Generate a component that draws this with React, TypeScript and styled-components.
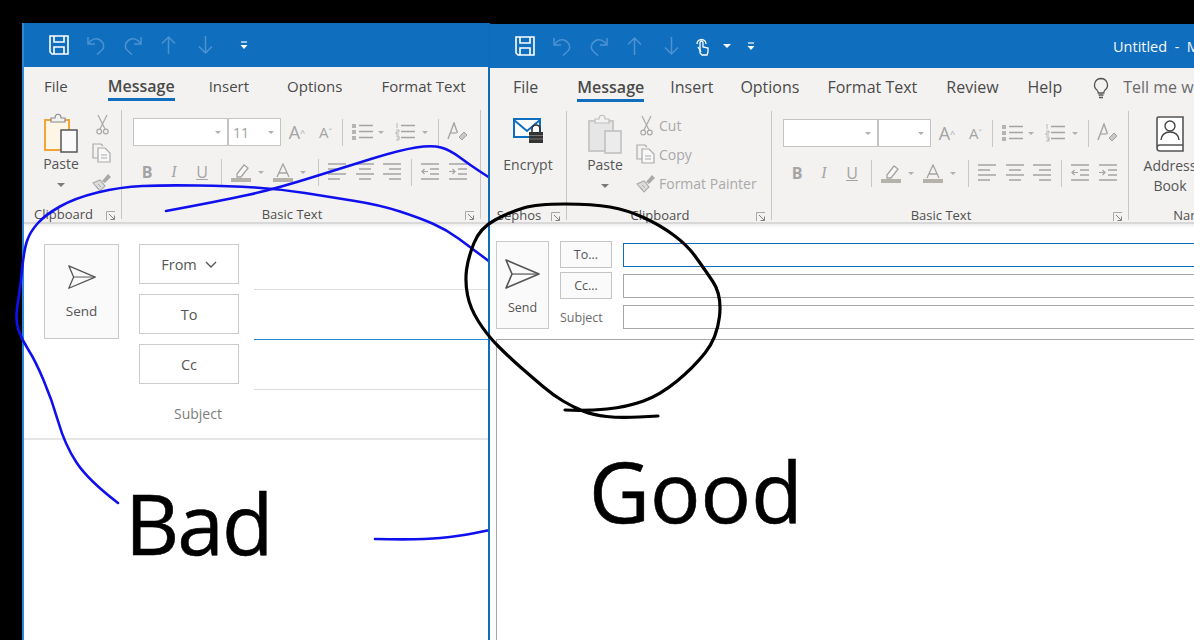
import React from 'react';
import styled, { createGlobalStyle } from 'styled-components';

const GlobalStyle = createGlobalStyle`
  html, body {
    margin: 0;
    height: 100%;
    background: #000;
    overflow: hidden;
    font-family: "Open Sans", "Noto Sans", sans-serif;
  }
`;

const Desktop = styled.div`
  position: relative;
  width: 1194px;
  height: 640px;
  overflow: hidden;
  background: #000;
`;

const Window = styled.div<{ $x: number; $y: number; $w: number; $z: number; $edge: string }>`
  position: absolute;
  left: ${(p) => p.$x}px;
  top: ${(p) => p.$y}px;
  width: ${(p) => p.$w}px;
  height: ${(p) => 640 - p.$y}px;
  z-index: ${(p) => p.$z};
  background: #fff;
  border-left: 2px solid ${(p) => p.$edge};
  display: flex;
  flex-direction: column;
  overflow: hidden;
`;

const TitleBar = styled.div`
  height: 44px;
  flex: none;
  background: #106ebe;
  display: flex;
  align-items: center;
  padding-left: 24px;
  color: #fff;
`;

const QuickSlot = styled.div<{ $w: number }>`
  width: ${(p) => p.$w}px;
  flex: none;
  display: flex;
  align-items: center;
`;

const TitleText = styled.div<{ $ml: number }>`
  margin-left: ${(p) => p.$ml}px;
  font-size: 14.5px;
  white-space: pre;
  color: #f4f8fc;
`;

const TabRow = styled.div<{ $pl: number }>`
  height: 40px;
  flex: none;
  background: #f3f2f1;
  display: flex;
  align-items: flex-start;
  padding-left: ${(p) => p.$pl}px;
`;

const Tab = styled.div<{ $active?: boolean; $ml: number; $size: number }>`
  margin-left: ${(p) => p.$ml}px;
  margin-top: 8px;
  height: 23px;
  line-height: 22px;
  font-size: ${(p) => p.$size}px;
  font-weight: ${(p) => (p.$active ? 600 : 400)};
  color: #4a4a4a;
  white-space: nowrap;
  flex: none;
  border-bottom: 3px solid ${(p) => (p.$active ? '#106ebe' : 'transparent')};
`;

const TellMe = styled.div`
  margin-left: 13px;
  margin-top: 8px;
  line-height: 22px;
  font-size: 16px;
  color: #6a6a6a;
  white-space: nowrap;
`;

const BulbBox = styled.div`
  margin-left: 30px;
  margin-top: 9px;
  color: #555;
  display: flex;
`;

const Ribbon = styled.div<{ $h: number }>`
  height: ${(p) => p.$h}px;
  flex: none;
  box-sizing: border-box;
  background: #f3f2f1;
  display: flex;
  padding-top: 3px;
  border-bottom: 2px solid #d8d8d8;
  box-shadow: 0 2px 3px rgba(0, 0, 0, 0.08);
  position: relative;
  z-index: 1;
`;

const Group = styled.div<{ $w: number }>`
  width: ${(p) => p.$w}px;
  height: 109px;
  flex: none;
  box-sizing: border-box;
  border-right: 1px solid #c6c6c6;
  position: relative;
  display: flex;
  flex-direction: column;
`;

const GroupBody = styled.div`
  flex: 1;
  display: flex;
  min-height: 0;
`;

const GroupLabel = styled.div`
  height: 20px;
  line-height: 18px;
  flex: none;
  margin-bottom: -6px;
  padding-right: 18px;
  text-align: center;
  font-size: 13px;
  color: #4f4f4f;
  white-space: nowrap;
`;

const Launcher = styled.svg`
  position: absolute;
  right: 5px;
  bottom: -2px;
  width: 10px;
  height: 10px;
`;

const BigButton = styled.div<{ $w: number; $ml?: number }>`
  width: ${(p) => p.$w}px;
  margin-left: ${(p) => p.$ml ?? 0}px;
  flex: none;
  display: flex;
  flex-direction: column;
  align-items: center;
  font-size: 14px;
  line-height: 20px;
  color: #555;
`;

const ButtonText = styled.span<{ $mt?: number }>`
  margin-top: ${(p) => p.$mt ?? 0}px;
`;

const IconHold = styled.div<{ $h: number }>`
  height: ${(p) => p.$h}px;
  display: flex;
  align-items: flex-end;
  justify-content: center;
  flex: none;
`;

const Caret = styled.div<{ $mt?: number; $soft?: boolean }>`
  width: 0;
  height: 0;
  border-left: ${(p) => (p.$soft ? 3.5 : 4)}px solid transparent;
  border-right: ${(p) => (p.$soft ? 3.5 : 4)}px solid transparent;
  border-top: ${(p) => (p.$soft ? 3 : 4)}px solid ${(p) => (p.$soft ? '#b0b0b0' : '#7a7a7a')};
  margin-top: ${(p) => p.$mt ?? 0}px;
`;

const SmallStack = styled.div<{ $ml: number }>`
  margin-left: ${(p) => p.$ml}px;
  padding-top: 2px;
  display: flex;
  flex-direction: column;
  gap: 5px;
`;

const SmallItem = styled.div`
  height: 24px;
  display: flex;
  align-items: center;
  gap: 2px;
  font-size: 14px;
  color: #a9a9a9;
  white-space: nowrap;
`;

const SmallIcon = styled.div`
  width: 22px;
  display: flex;
  justify-content: center;
  flex: none;
`;

const ToolColumn = styled.div`
  padding: 7px 0 0 11px;
  display: flex;
  flex-direction: column;
  gap: 10px;
`;

const ToolRow = styled.div`
  height: 30px;
  display: flex;
  align-items: center;
`;

const FontBox = styled.div<{ $w: number }>`
  width: ${(p) => p.$w}px;
  height: 28px;
  box-sizing: border-box;
  background: #fff;
  border: 1px solid #c4c4c4;
  display: flex;
  align-items: center;
  justify-content: space-between;
  padding: 0 6px 0 4px;
  font-size: 14px;
  color: #a0a0a0;
  flex: none;
`;

const Slot = styled.div<{ $w: number; $ml?: number }>`
  width: ${(p) => p.$w}px;
  margin-left: ${(p) => p.$ml ?? 0}px;
  display: flex;
  justify-content: center;
  align-items: center;
  flex: none;
  color: #a4a4a4;
`;

const ToolLetter = styled(Slot)<{ $bold?: boolean; $italic?: boolean; $under?: boolean }>`
  font-family: ${(p) => (p.$italic ? '"Liberation Serif", serif' : '"Open Sans", sans-serif')};
  font-size: 16px;
  line-height: 18px;
  font-weight: ${(p) => (p.$bold ? 700 : 400)};
  font-style: ${(p) => (p.$italic ? 'italic' : 'normal')};
  text-decoration: ${(p) => (p.$under ? 'underline' : 'none')};
`;

const GrowA = styled.span<{ $size: number }>`
  font-size: ${(p) => p.$size}px;
  line-height: 20px;
  color: #a4a4a4;
`;

const Tick = styled.span`
  font-size: 9px;
  line-height: 9px;
  align-self: flex-start;
  margin-top: 6px;
  color: #a4a4a4;
`;

const ToolSep = styled.div<{ $ml: number }>`
  width: 1px;
  height: 27px;
  margin-left: ${(p) => p.$ml}px;
  background: #c8c8c8;
  flex: none;
`;

const LeftForm = styled.div`
  height: 216px;
  flex: none;
  box-sizing: border-box;
  border-bottom: 2px solid #e6e6e6;
  display: flex;
  padding: 20px 0 0 20px;
`;

const SendButton = styled.div<{ $w: number; $h: number; $gap: number; $pt: number; $size: number }>`
  width: ${(p) => p.$w}px;
  height: ${(p) => p.$h}px;
  box-sizing: border-box;
  border: 1px solid #c9c9c9;
  padding-top: ${(p) => p.$pt}px;
  background: #fafafa;
  display: flex;
  flex-direction: column;
  align-items: center;
  gap: ${(p) => p.$gap}px;
  font-size: ${(p) => p.$size}px;
  color: #555;
  flex: none;
`;

const LeftFields = styled.div`
  margin-left: 20px;
  width: 100px;
  flex: none;
  display: flex;
  flex-direction: column;
  gap: 10px;
`;

const FieldButton = styled.div`
  height: 40px;
  flex: none;
  box-sizing: border-box;
  border: 1px solid #cbcbcb;
  display: flex;
  align-items: center;
  justify-content: center;
  gap: 8px;
  font-size: 14.5px;
  color: #555;
`;

const LeftSubject = styled.div`
  margin-left: 35px;
  font-size: 14px;
  line-height: 40px;
  color: #7d7d7d;
`;

const LeftLines = styled.div`
  margin-left: 15px;
  flex: 1;
  margin-top: -20px;
`;

const LineRow = styled.div<{ $h: number; $accent?: boolean }>`
  height: ${(p) => p.$h}px;
  box-sizing: border-box;
  border-bottom: 1px solid ${(p) => (p.$accent ? '#2b88d8' : '#dcdcdc')};
`;

const RightForm = styled.div`
  flex: none;
  display: flex;
  padding: 17px 0 0 6px;
`;

const RightFields = styled.div`
  margin-left: 11px;
  width: 52px;
  flex: none;
  display: flex;
  flex-direction: column;
  gap: 4px;
`;

const SmallField = styled.div`
  height: 27px;
  box-sizing: border-box;
  border: 1px solid #c4c4c4;
  background: #fafafa;
  display: flex;
  align-items: center;
  justify-content: center;
  font-size: 12.5px;
  color: #555;
`;

const RightSubject = styled.div`
  margin-top: 3px;
  font-size: 12.5px;
  line-height: 24px;
  color: #6b6b6b;
`;

const RightInputs = styled.div`
  margin: 2px 0 0 11px;
  flex: 1;
  display: flex;
  flex-direction: column;
  gap: 7px;
`;

const Input = styled.div<{ $focus?: boolean }>`
  height: 24px;
  box-sizing: border-box;
  border: 1px solid ${(p) => (p.$focus ? '#0f6cbd' : '#a6a6a6')};
  background: #fff;
`;

const Composer = styled.div`
  margin: 9px 0 0 6px;
  flex: 1;
  border: 1px solid #a6a6a6;
  border-right: none;
  border-bottom: none;
`;

const Ink = styled.svg<{ $z: number }>`
  position: absolute;
  left: 0;
  top: 0;
  width: 1194px;
  height: 640px;
  z-index: ${(p) => p.$z};
  pointer-events: none;
`;

const Scrawl = styled.div<{ $x: number; $y: number; $track?: number }>`
  position: absolute;
  left: ${(p) => p.$x}px;
  top: ${(p) => p.$y}px;
  z-index: 4;
  font-size: 84px;
  line-height: 100px;
  letter-spacing: ${(p) => p.$track ?? 0}px;
  color: #000;
  -webkit-text-stroke: 0.6px #000;
`;

// turns the traced points of a pen stroke into a smooth path
const smooth = (pts: number[][]) => {
  let d = `M${pts[0][0]} ${pts[0][1]}`;
  for (let i = 1; i < pts.length - 1; i++) {
    const mx = (pts[i][0] + pts[i + 1][0]) / 2;
    const my = (pts[i][1] + pts[i + 1][1]) / 2;
    d += ` Q${pts[i][0]} ${pts[i][1]} ${mx} ${my}`;
  }
  const last = pts[pts.length - 1];
  return d + ` L${last[0]} ${last[1]}`;
};

const blueStrokes = [
  [[118, 503], [88, 480], [65, 445], [52, 400], [35, 360], [22, 340], [15, 320], [20, 290], [24, 250], [30, 232], [45, 215], [75, 198], [120, 187], [165, 185], [230, 186], [280, 189], [330, 197], [380, 205], [420, 218], [447, 230], [470, 247], [490, 262]],
  [[166, 211], [220, 201], [275, 189], [345, 167], [400, 150], [432, 145], [450, 150], [470, 165], [490, 178]],
  [[375, 539], [420, 540], [460, 536], [490, 530]],
];

const blackStroke = [[565, 410], [587, 411], [627, 407], [660, 395], [693, 368], [717, 338], [722, 295], [703, 267], [687, 245], [660, 225], [627, 210], [593, 204], [537, 204], [510, 212], [480, 228], [468, 258], [465, 282], [470, 308], [487, 335], [510, 358], [533, 378], [553, 395], [573, 407], [593, 415], [620, 418], [658, 416]];

const Svg: React.FC<{ w: number; h: number; children: React.ReactNode }> = ({ w, h, children }) => (
  <svg width={w} height={h} viewBox={`0 0 ${w} ${h}`} fill="none" style={{ display: 'block' }}>
    {children}
  </svg>
);

const SaveIcon = () => (
  <Svg w={22} h={22}>
    <path d="M2 2h18v18H4l-2-2z" stroke="#fff" strokeWidth="1.6" />
    <path d="M6 2v6h10V2M6 20v-7h10v7" stroke="#fff" strokeWidth="1.6" />
  </Svg>
);
const UndoIcon = ({ flip }: { flip?: boolean }) => (
  <Svg w={20} h={20}>
    <g transform={flip ? 'translate(20 0) scale(-1 1)' : undefined} stroke="#4c93d4" strokeWidth="1.5">
      <path d="M2 2v7h7" />
      <path d="M2.5 8.5C5 4 10 2.5 14 5s5 8 1.5 10.5L11 19.5" />
    </g>
  </Svg>
);
const ArrowIcon = ({ down }: { down?: boolean }) => (
  <Svg w={17} h={20}>
    <g transform={down ? 'translate(0 20) scale(1 -1)' : undefined} stroke="#4c93d4" strokeWidth="1.5">
      <path d="M8.5 19V2M2 8.5l6.5-6.5 6.5 6.5" />
    </g>
  </Svg>
);
const CustomizeIcon = () => (
  <Svg w={8} h={9}>
    <path d="M1 1h6" stroke="#fff" strokeWidth="1.2" />
    <path d="M0.5 4h7L4 8z" fill="#fff" />
  </Svg>
);
const TouchIcon = () => (
  <Svg w={16} h={20}>
    <path d="M2 8a4.5 4.5 0 1 1 9 0" stroke="#fff" strokeWidth="1.3" />
    <path d="M5 17V6.5a1.5 1.5 0 0 1 3 0V11l5 1v4l-1 3H7z" stroke="#fff" strokeWidth="1.3" />
    <path d="M3 11l3 5" stroke="#fff" strokeWidth="1.3" />
  </Svg>
);
const WhiteCaret = () => (
  <Svg w={8} h={5}>
    <path d="M0 0h8L4 4z" fill="#fff" />
  </Svg>
);
const BulbIcon = () => (
  <Svg w={18} h={22}>
    <path d="M9 1.5a6.5 6.5 0 0 0-4 11.6c.8.8 1.2 1.6 1.2 2.9h5.6c0-1.3.4-2.1 1.2-2.9A6.5 6.5 0 0 0 9 1.5z" stroke="#555" strokeWidth="1.3" />
    <path d="M6.5 18h5M7 20.5h4" stroke="#555" strokeWidth="1.3" />
  </Svg>
);
const PasteIcon = ({ muted }: { muted?: boolean }) => (
  <Svg w={36} h={40}>
    <path d="M2 7h24v30H2z" fill={muted ? '#e6e6e6' : '#fdf5e6'} stroke={muted ? '#c8c8c8' : '#f2a33a'} strokeWidth="2" />
    <path d="M8 5h4c0-5 6-5 6 0h4v4H8z" fill="#f3f2f1" stroke={muted ? '#bdbdbd' : '#8a8a8a'} strokeWidth="1.2" />
    <path d="M18 17h16v22H18z" fill={muted ? '#ececec' : '#fafafa'} stroke={muted ? '#bdbdbd' : '#555'} strokeWidth="1.5" />
  </Svg>
);
const CutIcon = ({ c }: { c: string }) => (
  <Svg w={13} h={21}>
    <path d="M2 1l7 14M11 1L4 15" stroke={c} strokeWidth="1.2" />
    <circle cx="3.2" cy="17.5" r="2.4" stroke={c} strokeWidth="1.2" />
    <circle cx="9.8" cy="17.5" r="2.4" stroke={c} strokeWidth="1.2" />
  </Svg>
);
const CopyIcon = ({ c }: { c: string }) => (
  <Svg w={20} h={20}>
    <path d="M6 15H1V1h8l2 2" stroke={c} strokeWidth="1.2" />
    <path d="M6 5h7l5 5v9H6z" fill="#f8f8f8" stroke={c} strokeWidth="1.2" />
    <path d="M9 12h6M9 15h6" stroke={c} strokeWidth="1" />
  </Svg>
);
const BrushIcon = ({ c }: { c: string }) => (
  <Svg w={20} h={19}>
    <path d="M1 10l7 8 5-5-5-6z" fill="#dcdcdc" stroke={c} strokeWidth="1.1" />
    <path d="M10 8l6-7 3 3-6 6" fill={c} />
    <path d="M4 13l3 3M6 11l3 3" stroke={c} strokeWidth="1" />
  </Svg>
);
const EncryptIcon = () => (
  <Svg w={30} h={26}>
    <path d="M1 1h26v18H1z" fill="#fff" stroke="#106ebe" strokeWidth="2" />
    <path d="M1 2l13 11L27 2" stroke="#106ebe" strokeWidth="2" />
    <path d="M19 14v-3a4 4 0 0 1 8 0v3" stroke="#333" strokeWidth="1.6" />
    <path d="M16 14h14v11H16z" fill="#333" />
    <path d="M16 17.5h14M16 21h14" stroke="#777" strokeWidth="1" />
  </Svg>
);
const BookIcon = () => (
  <Svg w={28} h={36}>
    <path d="M1 32V2.5A1.5 1.5 0 0 1 2.5 1H27v34H4a3 3 0 0 1-3-3zM1 32a3 3 0 0 1 3-3h23" stroke="#555" strokeWidth="1.6" fill="#fff" />
    <circle cx="14" cy="10" r="5" stroke="#444" strokeWidth="1.4" />
    <path d="M5 24c0-5 4-8 9-8s9 3 9 8" stroke="#444" strokeWidth="1.4" />
  </Svg>
);
const BulletsIcon = () => (
  <Svg w={22} h={20}>
    <path d="M1 2h4v4H1zM1 8h4v4H1zM1 14h4v4H1z" fill="#b4b4b4" />
    <path d="M8 3.5h14M8 9.5h14M8 15.5h14" stroke="#a4a4a4" strokeWidth="1.4" />
  </Svg>
);
const NumbersIcon = () => (
  <Svg w={20} h={20}>
    <path d="M6 3.5h14M6 9.5h14M6 15.5h14" stroke="#a4a4a4" strokeWidth="1.4" />
    <path d="M2 1v5M1 8h3v2H1v2h3M1 14h3v4H1M2 16h2" stroke="#b0b0b0" strokeWidth="0.9" />
  </Svg>
);
const ClearIcon = () => (
  <Svg w={20} h={20}>
    <path d="M1 17L7 1l3.5 10" stroke="#a4a4a4" strokeWidth="1.4" />
    <path d="M3.5 11h6" stroke="#a4a4a4" strokeWidth="1.2" />
    <path d="M12 15l5-5 3 3-5 5z" fill="#c8c8c8" stroke="#a4a4a4" />
  </Svg>
);
const HighlightIcon = () => (
  <Svg w={20} h={19}>
    <path d="M6 11L13 2l4 3-7 9-4 0z" fill="#f8f8f8" stroke="#a4a4a4" strokeWidth="1.3" />
    <path d="M0 15h20v4H0z" fill="#b5b1ab" />
  </Svg>
);
const FontColorIcon = () => (
  <Svg w={20} h={19}>
    <path d="M4 14L10 1l6 13M6 10h8" stroke="#a4a4a4" strokeWidth="1.3" />
    <path d="M0 15h20v4H0z" fill="#b5b1ab" />
  </Svg>
);
const AlignIcon = ({ mode }: { mode: 'left' | 'center' | 'right' }) => {
  const short = mode === 'left' ? 'M0 6h12M0 16h12' : mode === 'center' ? 'M3 6h12M3 16h12' : 'M6 6h12M6 16h12';
  return (
    <Svg w={18} h={18}>
      <path d={`M0 1h18M0 11h18 ${short}`} stroke="#a4a4a4" strokeWidth="1.4" />
    </Svg>
  );
};
const IndentIcon = ({ out }: { out?: boolean }) => (
  <Svg w={18} h={18}>
    <path d="M0 1h18M9 6h9M9 11h9M0 16h18" stroke="#a4a4a4" strokeWidth="1.3" />
    <path d={out ? 'M7 8.5H1M3.5 6L1 8.5 3.5 11' : 'M0 8.5h6M3.5 6L6 8.5 3.5 11'} stroke="#a4a4a4" strokeWidth="1.2" />
  </Svg>
);
const SendIcon = ({ w }: { w: number }) => (
  <svg width={w} height={w * 0.86} viewBox="0 0 35 30" fill="none" style={{ display: 'block' }}>
    <path d="M1 1l33 14L1 29l6-14z" stroke="#555" strokeWidth="1.6" strokeLinejoin="round" />
    <path d="M7 15h27" stroke="#555" strokeWidth="1.2" />
  </svg>
);

const LauncherMark = () => (
  <Launcher viewBox="0 0 10 10" fill="none">
    <path d="M0.5 9V0.5H9" stroke="#a8a8a8" />
    <path d="M3 3l5 5M4.5 8.5H8.5V4.5" stroke="#808080" />
  </Launcher>
);

const QuickBar: React.FC<{ touch?: boolean }> = ({ touch }) => (
  <>
    <QuickSlot $w={38}><SaveIcon /></QuickSlot>
    <QuickSlot $w={37}><UndoIcon /></QuickSlot>
    <QuickSlot $w={37}><UndoIcon flip /></QuickSlot>
    <QuickSlot $w={37}><ArrowIcon /></QuickSlot>
    <QuickSlot $w={32}><ArrowIcon down /></QuickSlot>
    {touch && <QuickSlot $w={28}><TouchIcon /></QuickSlot>}
    {touch && <QuickSlot $w={24}><WhiteCaret /></QuickSlot>}
    {!touch && <QuickSlot $w={11} />}
    <QuickSlot $w={10}><CustomizeIcon /></QuickSlot>
  </>
);

const BasicText: React.FC<{ w: number; size?: string }> = ({ w, size }) => (
  <Group $w={w}>
    <GroupBody>
      <ToolColumn>
        <ToolRow>
          <FontBox $w={95}><span /><Caret $soft /></FontBox>
          <FontBox $w={53}><span>{size}</span><Caret $soft /></FontBox>
          <Slot $w={32}><GrowA $size={18}>A</GrowA><Tick>^</Tick></Slot>
          <Slot $w={25}><GrowA $size={15}>A</GrowA><Tick>ˇ</Tick></Slot>
          <ToolSep $ml={4} />
          <Slot $w={22} $ml={8}><BulletsIcon /></Slot>
          <Slot $w={10} $ml={3}><Caret $soft /></Slot>
          <Slot $w={20} $ml={9}><NumbersIcon /></Slot>
          <Slot $w={10} $ml={5}><Caret $soft /></Slot>
          <ToolSep $ml={8} />
          <Slot $w={20} $ml={8}><ClearIcon /></Slot>
        </ToolRow>
        <ToolRow>
          <ToolLetter $w={12} $ml={8} $bold>B</ToolLetter>
          <ToolLetter $w={12} $ml={15} $italic>I</ToolLetter>
          <ToolLetter $w={12} $ml={16} $under>U</ToolLetter>
          <ToolSep $ml={13} />
          <Slot $w={20} $ml={9}><HighlightIcon /></Slot>
          <Slot $w={10} $ml={5}><Caret $soft /></Slot>
          <Slot $w={20} $ml={7}><FontColorIcon /></Slot>
          <Slot $w={10} $ml={5}><Caret $soft /></Slot>
          <ToolSep $ml={10} />
          <Slot $w={18} $ml={9}><AlignIcon mode="left" /></Slot>
          <Slot $w={18} $ml={10}><AlignIcon mode="center" /></Slot>
          <Slot $w={18} $ml={9}><AlignIcon mode="right" /></Slot>
          <ToolSep $ml={10} />
          <Slot $w={18} $ml={9}><IndentIcon out /></Slot>
          <Slot $w={18} $ml={10}><IndentIcon /></Slot>
        </ToolRow>
      </ToolColumn>
    </GroupBody>
    <GroupLabel>Basic Text</GroupLabel>
    <LauncherMark />
  </Group>
);

const LeftWindow = () => (
  <Window $x={22} $y={23} $w={466} $z={0} $edge="#2b88d8">
    <TitleBar><QuickBar /></TitleBar>
    <TabRow $pl={20}>
      <Tab $ml={0} $size={15}>File</Tab>
      <Tab $ml={40} $size={16} $active>Message</Tab>
      <Tab $ml={34} $size={15}>Insert</Tab>
      <Tab $ml={38} $size={15}>Options</Tab>
      <Tab $ml={39} $size={15}>Format Text</Tab>
    </TabRow>
    <Ribbon $h={117}>
      <Group $w={98}>
        <GroupBody>
          <BigButton $w={74}>
            <IconHold $h={43}><PasteIcon /></IconHold>
            <ButtonText $mt={1}>Paste</ButtonText>
            <Caret $mt={9} />
          </BigButton>
          <SmallStack $ml={-7}>
            <SmallItem><SmallIcon><CutIcon c="#a9a9a9" /></SmallIcon></SmallItem>
            <SmallItem><SmallIcon><CopyIcon c="#a9a9a9" /></SmallIcon></SmallItem>
            <SmallItem><SmallIcon><BrushIcon c="#a9a9a9" /></SmallIcon></SmallItem>
          </SmallStack>
        </GroupBody>
        <GroupLabel>Clipboard</GroupLabel>
        <LauncherMark />
      </Group>
      <BasicText w={359} size="11" />
    </Ribbon>
    <LeftForm>
      <SendButton $w={75} $h={95} $gap={13} $pt={20} $size={13.5}>
        <SendIcon w={28} />
        <span>Send</span>
      </SendButton>
      <LeftFields>
        <FieldButton>
          From
          <svg width="12" height="7" viewBox="0 0 12 7" fill="none">
            <path d="M1 1l5 5 5-5" stroke="#555" strokeWidth="1.4" />
          </svg>
        </FieldButton>
        <FieldButton>To</FieldButton>
        <FieldButton>Cc</FieldButton>
        <LeftSubject>Subject</LeftSubject>
      </LeftFields>
      <LeftLines>
        <LineRow $h={66} />
        <LineRow $h={50} $accent />
        <LineRow $h={50} />
      </LeftLines>
    </LeftForm>
  </Window>
);

const RightWindow = () => (
  <Window $x={488} $y={24} $w={790} $z={2} $edge="#0f6cbd">
    <TitleBar>
      <QuickBar touch />
      <TitleText $ml={356}>{'Untitled  -  Message (HTML)'}</TitleText>
    </TitleBar>
    <TabRow $pl={23}>
      <Tab $ml={0} $size={16}>File</Tab>
      <Tab $ml={39} $size={16} $active>Message</Tab>
      <Tab $ml={26} $size={16}>Insert</Tab>
      <Tab $ml={27} $size={16}>Options</Tab>
      <Tab $ml={28} $size={16}>Format Text</Tab>
      <Tab $ml={29} $size={16}>Review</Tab>
      <Tab $ml={29} $size={16}>Help</Tab>
      <BulbBox><BulbIcon /></BulbBox>
      <TellMe>Tell me what you want to do</TellMe>
    </TabRow>
    <Ribbon $h={116}>
      <Group $w={77}>
        <GroupBody>
          <BigButton $w={76}>
            <IconHold $h={33}><EncryptIcon /></IconHold>
            <ButtonText $mt={11}>Encrypt</ButtonText>
          </BigButton>
        </GroupBody>
        <GroupLabel>Sephos</GroupLabel>
        <LauncherMark />
      </Group>
      <Group $w={205}>
        <GroupBody>
          <BigButton $w={76}>
            <IconHold $h={43}><PasteIcon muted /></IconHold>
            <ButtonText $mt={1}>Paste</ButtonText>
            <Caret $mt={9} />
          </BigButton>
          <SmallStack $ml={-8}>
            <SmallItem><SmallIcon><CutIcon c="#a9a9a9" /></SmallIcon>Cut</SmallItem>
            <SmallItem><SmallIcon><CopyIcon c="#a9a9a9" /></SmallIcon>Copy</SmallItem>
            <SmallItem><SmallIcon><BrushIcon c="#a9a9a9" /></SmallIcon>Format Painter</SmallItem>
          </SmallStack>
        </GroupBody>
        <GroupLabel>Clipboard</GroupLabel>
        <LauncherMark />
      </Group>
      <BasicText w={357} />
      <Group $w={150}>
        <GroupBody>
          <BigButton $w={82}>
            <IconHold $h={41}><BookIcon /></IconHold>
            <ButtonText $mt={4}>Address</ButtonText>
            <span>Book</span>
          </BigButton>
        </GroupBody>
        <GroupLabel>Names</GroupLabel>
      </Group>
    </Ribbon>
    <RightForm>
      <SendButton $w={53} $h={88} $gap={10} $pt={17} $size={12.5}>
        <SendIcon w={35} />
        <span>Send</span>
      </SendButton>
      <RightFields>
        <SmallField>To...</SmallField>
        <SmallField>Cc...</SmallField>
        <RightSubject>Subject</RightSubject>
      </RightFields>
      <RightInputs>
        <Input $focus />
        <Input />
        <Input />
      </RightInputs>
    </RightForm>
    <Composer />
  </Window>
);

export default function App() {
  return (
    <Desktop>
      <GlobalStyle />
      <LeftWindow />
      <Ink $z={1} viewBox="0 0 1194 640" fill="none">
        {blueStrokes.map((s, i) => (
          <path key={i} d={smooth(s)} stroke="#1010ee" strokeWidth="2.6" strokeLinecap="round" />
        ))}
      </Ink>
      <RightWindow />
      <Ink $z={3} viewBox="0 0 1194 640" fill="none">
        <path d={smooth(blackStroke)} stroke="#000" strokeWidth="3.2" strokeLinecap="round" />
      </Ink>
      <Scrawl $x={125} $y={473} $track={-2}>Bad</Scrawl>
      <Scrawl $x={589} $y={441}>Good</Scrawl>
    </Desktop>
  );
}
